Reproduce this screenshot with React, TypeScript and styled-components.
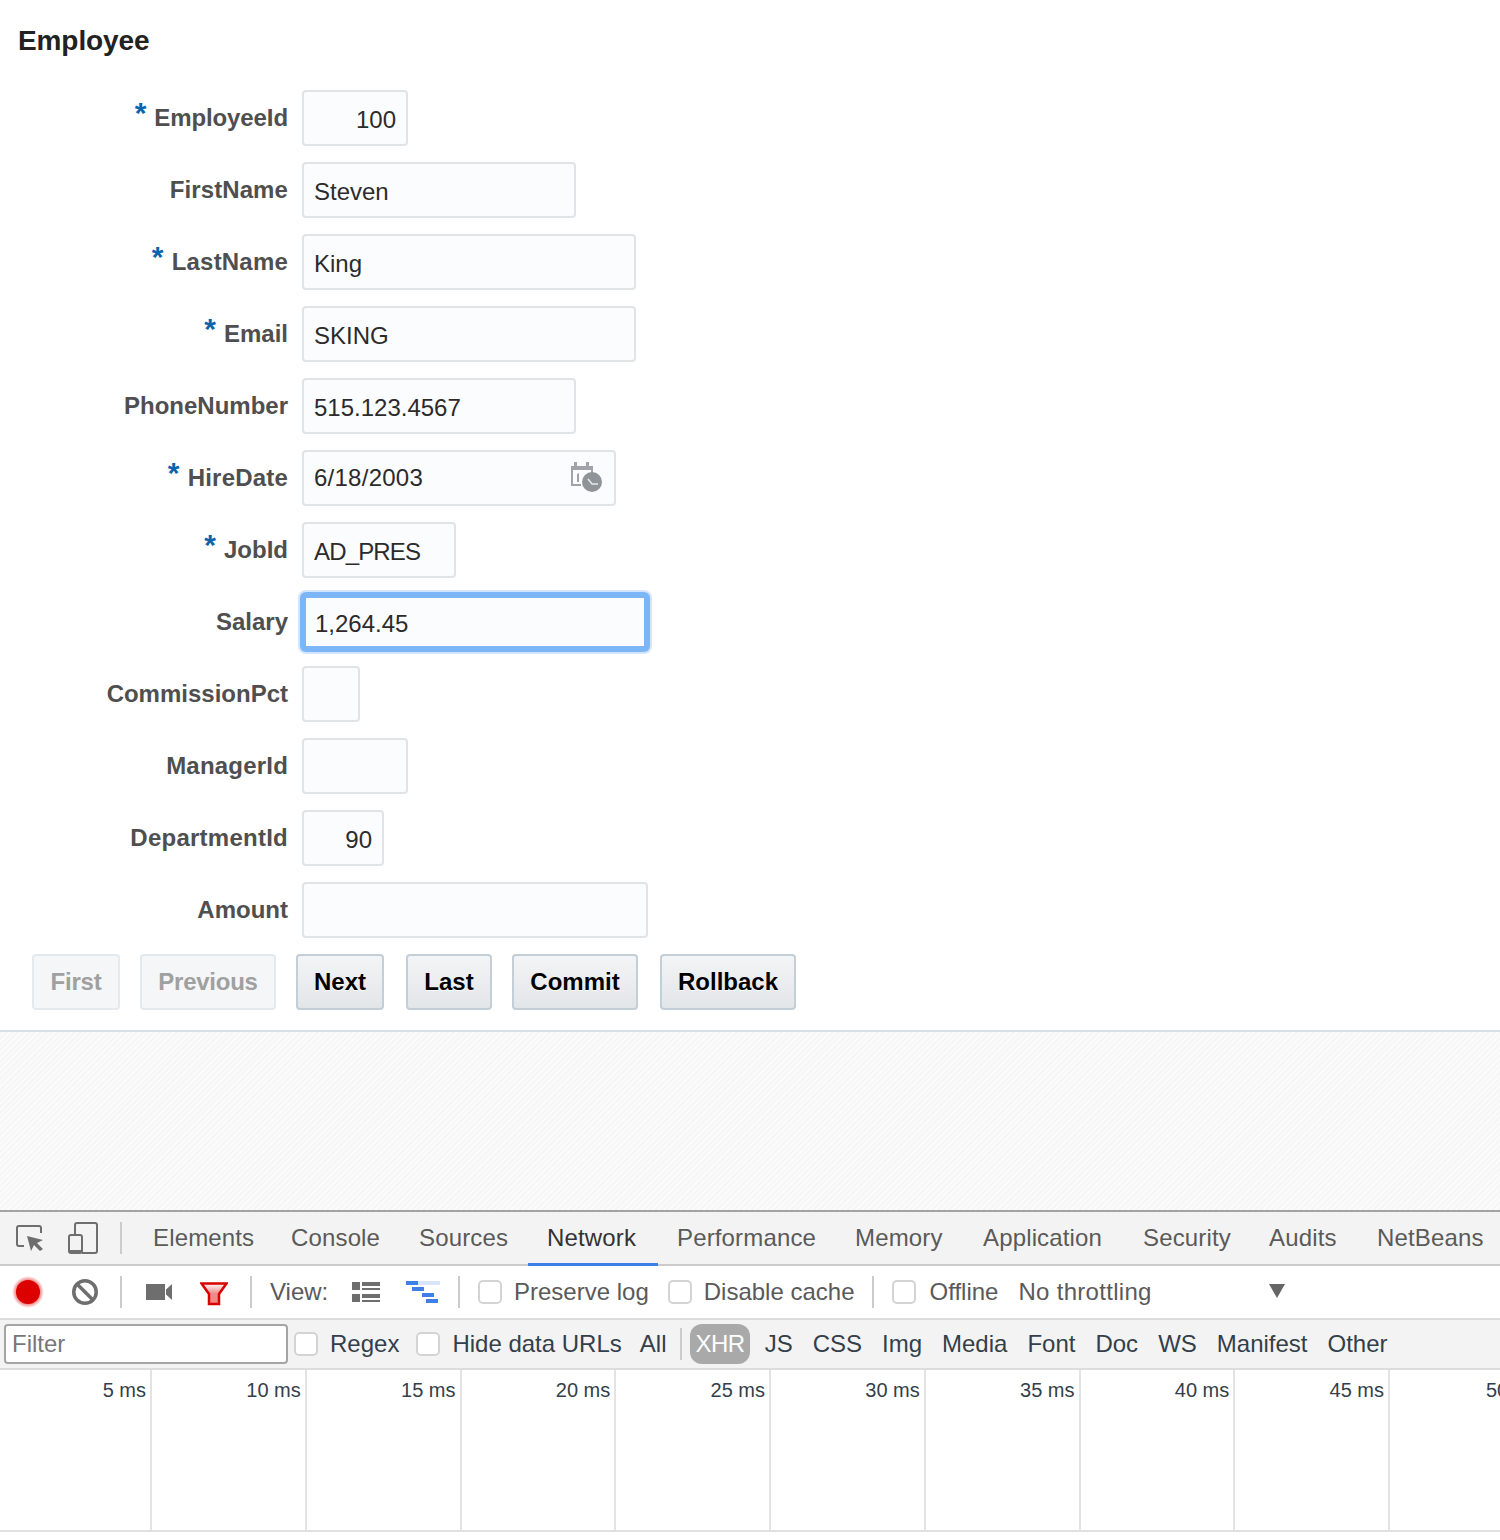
import styled, { createGlobalStyle } from 'styled-components'

const GlobalStyle = createGlobalStyle`
  html, body {
    margin: 0;
    background: #fff;
  }
  body {
    width: 1500px;
    height: 1540px;
    overflow: hidden;
    font-family: "Liberation Sans", Arial, sans-serif;
  }
  * {
    box-sizing: border-box;
  }
`

const Page = styled.div`
  display: flex;
  flex-direction: column;
  height: 1540px;
`
const Title = styled.h1`
  margin: 0;
  padding-left: 18px;
  height: 82px;
  font-size: 28px;
  line-height: 82px;
  font-weight: 700;
  letter-spacing: -0.1px;
  color: #222;
`
const Form = styled.div`
  display: flex;
  flex-direction: column;
  gap: 16px;
  margin-top: 8px;
`
const Row = styled.div`
  display: flex;
  align-items: center;
  height: 56px;
`
const Label = styled.label<{ $track?: number }>`
  width: 288px;
  margin-right: 14px;
  text-align: right;
  font-size: 24px;
  font-weight: 700;
  letter-spacing: ${(p) => p.$track ?? 0}px;
  color: #4f4f4f;
`
const Star = styled.span`
  margin-right: 8px;
  font-size: 30px;
  line-height: 0;
  vertical-align: 3px;
  color: #0a63ad;
`
const Input = styled.input<{ $w: number; $end?: boolean; $focus?: boolean; $track?: number }>`
  width: ${(p) => p.$w}px;
  height: 56px;
  padding: 4px ${(p) => (p.$focus ? '9px' : '10px')} 0;
  border: ${(p) => (p.$focus ? '4px solid #7db6f7' : '2px solid #e0e4e7')};
  border-radius: 4px;
  background: #fbfcfe;
  box-shadow: ${(p) => (p.$focus ? '0 0 0 2px #7db6f7, 0 0 0 4px #d3e5fb' : 'none')};
  outline: none;
  font: 24px "Liberation Sans", Arial, sans-serif;
  letter-spacing: ${(p) => p.$track ?? 0}px;
  color: #2b2b2b;
  text-align: ${(p) => (p.$end ? 'right' : 'left')};
`
const DateBox = styled.div`
  display: flex;
  align-items: center;
  width: 314px;
  height: 56px;
  padding: 0 12px 0 10px;
  border: 2px solid #e0e4e7;
  border-radius: 4px;
  background: #fbfcfe;
`
const DateInput = styled.input`
  flex: 1;
  min-width: 0;
  padding: 0;
  border: 0;
  outline: none;
  background: transparent;
  font: 24px "Liberation Sans", Arial, sans-serif;
  letter-spacing: 0.25px;
  color: #2b2b2b;
`
const Buttons = styled.div`
  display: flex;
  gap: 20px;
  margin-top: 16px;
  padding-left: 32px;
`
const Button = styled.button<{ $w: number; $l?: number }>`
  width: ${(p) => p.$w}px;
  height: 56px;
  margin-left: ${(p) => p.$l ?? 0}px;
  padding: 0;
  border: 2px solid #c3ced7;
  border-radius: 4px;
  background: linear-gradient(#f2f4f5, #e3e6e9);
  font: 700 24px "Liberation Sans", Arial, sans-serif;
  color: #000;
  text-shadow: 0 1px 0 #fff;
  &:disabled {
    border-color: #e4e9ee;
    background: #f5f6f8;
    color: #a0a0a0;
    letter-spacing: -0.25px;
    text-shadow: none;
  }
`
const Hatch = styled.div`
  height: 180px;
  margin-top: 20px;
  border-top: 2px solid #d9e1e8;
  background: repeating-linear-gradient(135deg, #f6f6f6 0 2px, #fbfbfb 2px 4px);
`
const Tabs = styled.div`
  display: flex;
  align-items: center;
  height: 56px;
  border-top: 2px solid #a3a3a3;
  border-bottom: 2px solid #ccc;
  background: #f3f3f3;
`
const Slot = styled.div<{ $w: number }>`
  display: flex;
  align-items: center;
  justify-content: center;
  flex: 0 0 ${(p) => p.$w}px;
`
const Divider = styled.div<{ $l: number; $r: number }>`
  flex: 0 0 2px;
  height: 32px;
  margin-left: ${(p) => p.$l}px;
  margin-right: ${(p) => p.$r}px;
  background: #ccc;
`
const Tab = styled.div<{ $w: number; $active?: boolean }>`
  display: flex;
  align-items: center;
  align-self: stretch;
  flex: 0 0 ${(p) => p.$w}px;
  margin-bottom: -2px;
  padding-left: 19px;
  border-bottom: 3px solid ${(p) => (p.$active ? '#3f7fe8' : 'transparent')};
  font-size: 24px;
  letter-spacing: 0.15px;
  color: ${(p) => (p.$active ? '#333' : '#5a5a5a')};
`
const Toolbar = styled.div`
  display: flex;
  align-items: center;
  height: 52px;
  background: #fff;
  font-size: 24px;
  color: #5a5a5a;
`
const ViewText = styled.span`
  flex: 0 0 60px;
`
const Check = styled.span`
  flex: 0 0 24px;
  height: 24px;
  border: 2px solid #d4d4d4;
  border-radius: 5px;
  background: #fff;
`
const CheckLabel = styled.span<{ $l: number; $r: number }>`
  margin-left: ${(p) => p.$l}px;
  margin-right: ${(p) => p.$r}px;
  white-space: nowrap;
`
const Throttling = styled.span`
  letter-spacing: 0.3px;
  white-space: nowrap;
`
const Arrow = styled.span`
  margin-left: 117px;
  margin-top: -2px;
  width: 0;
  height: 0;
  border-left: 8px solid transparent;
  border-right: 8px solid transparent;
  border-top: 14px solid #666;
`
const FilterBar = styled.div`
  display: flex;
  align-items: center;
  height: 52px;
  padding-left: 4px;
  border-top: 2px solid #ddd;
  border-bottom: 2px solid #ddd;
  background: #f3f3f3;
  font-size: 24px;
  color: #333f4a;
`
const FilterInput = styled.input`
  flex: 0 0 284px;
  min-width: 0;
  height: 40px;
  margin-right: 6px;
  padding: 0 6px;
  border: 2px solid #a5a5a5;
  border-radius: 4px;
  background: #fff;
  outline: none;
  font: 24px "Liberation Sans", Arial, sans-serif;
  &::placeholder {
    color: #777;
    opacity: 1;
  }
`
const Kind = styled.span<{ $selected?: boolean }>`
  margin: ${(p) => (p.$selected ? '0 5px 0 0' : '0 10px')};
  padding: 0 ${(p) => (p.$selected ? 5 : 0)}px;
  height: 40px;
  line-height: 40px;
  border-radius: 12px;
  background: ${(p) => (p.$selected ? '#a9a9a9' : 'transparent')};
  color: ${(p) => (p.$selected ? '#fff' : 'inherit')};
  letter-spacing: ${(p) => (p.$selected ? -0.5 : 0)}px;
  white-space: nowrap;
`
const Timeline = styled.div`
  display: flex;
  height: 162px;
  overflow: hidden;
  border-bottom: 2px solid #e0e0e0;
`
const Tick = styled.div`
  flex: 0 0 154.75px;
  padding: 8px 4px 0 0;
  border-right: 2px solid #e3e3e3;
  text-align: right;
  font-size: 20px;
  line-height: 24px;
  color: #333f4a;
  white-space: nowrap;
  &:first-child {
    flex-basis: 152px;
  }
  &:last-child {
    flex: 0 0 200px;
    padding-left: 96px;
    text-align: left;
    border-right: 0;
  }
`

const InspectIcon = () => (
  <svg width="28" height="26" viewBox="0 0 28 26">
    <path d="M8 21H3a2 2 0 0 1-2-2V3a2 2 0 0 1 2-2h20a2 2 0 0 1 2 2v5" fill="none" stroke="#6e6e6e" strokeWidth="2" />
    <path d="M11 11l16 4-6 3 6 6-3 2-6-6-3 6z" fill="#6e6e6e" />
  </svg>
)
const DeviceIcon = () => (
  <svg width="30" height="32" viewBox="0 0 30 32">
    <path d="M7 12V3a2 2 0 0 1 2-2h18a2 2 0 0 1 2 2v26a2 2 0 0 1-2 2H14" fill="none" stroke="#6e6e6e" strokeWidth="2" />
    <rect x="1" y="13" width="13" height="18" rx="2" fill="none" stroke="#6e6e6e" strokeWidth="2" />
    <rect x="1" y="28" width="13" height="3" fill="#6e6e6e" />
  </svg>
)
const RecordIcon = () => (
  <svg width="32" height="32" viewBox="0 0 32 32">
    <defs>
      <radialGradient id="glow">
        <stop offset="0.7" stopColor="#dc0000" stopOpacity="0.55" />
        <stop offset="1" stopColor="#dc0000" stopOpacity="0" />
      </radialGradient>
    </defs>
    <circle cx="16" cy="16" r="16" fill="url(#glow)" />
    <circle cx="16" cy="16" r="12" fill="#dc0000" />
  </svg>
)
const StopIcon = () => (
  <svg width="28" height="28" viewBox="0 0 28 28">
    <circle cx="14" cy="14" r="11.250" fill="none" stroke="#6e6e6e" strokeWidth="3.500" />
    <path d="M6 6l16 16" stroke="#6e6e6e" strokeWidth="3.500" />
  </svg>
)
const CameraIcon = () => (
  <svg width="26" height="16" viewBox="0 0 26 16">
    <rect width="19" height="16" fill="#6e6e6e" />
    <path d="M20 5.500L26 0v16l-6-5.500z" fill="#6e6e6e" />
  </svg>
)
const FunnelIcon = () => (
  <svg width="28" height="27" viewBox="0 -3 28 27">
    <defs>
      <linearGradient id="funnel" x1="0" y1="0" x2="0" y2="1">
        <stop offset="0.1" stopColor="#fbe3e3" />
        <stop offset="0.5" stopColor="#ee8a8a" />
      </linearGradient>
    </defs>
    <path d="M1.500 1.500h25L19 12v10H9V12z" fill="url(#funnel)" stroke="#d90000" strokeWidth="2.500" />
  </svg>
)
const ListIcon = () => (
  <svg width="28" height="20" viewBox="0 0 28 20" fill="#6e6e6e">
    <rect width="8" height="8" />
    <rect y="12" width="8" height="8" />
    <rect x="10" width="18" height="4" />
    <rect x="10" y="6" width="18" height="2" />
    <rect x="10" y="12" width="18" height="4" />
    <rect x="10" y="18" width="18" height="2" />
  </svg>
)
const WaterfallIcon = () => (
  <svg width="34" height="22" viewBox="0 0 34 22">
    <rect x="12" width="22" height="4" fill="#d7e4fa" />
    <rect width="12" height="4" fill="#3f7fe8" />
    <rect x="6" y="6" width="12" height="4" fill="#3f7fe8" />
    <rect x="16" y="12" width="12" height="4" fill="#3f7fe8" />
    <rect x="20" y="18" width="12" height="4" fill="#3f7fe8" />
  </svg>
)
const CalendarIcon = () => (
  <svg width="32" height="32" viewBox="0 0 32 32">
    <path d="M11 23H2V5h20v6" fill="none" stroke="#a0a4a8" strokeWidth="2" />
    <rect x="1" y="4" width="22" height="4" fill="#a0a4a8" />
    <rect x="4" y="0" width="3" height="6" fill="#a0a4a8" />
    <rect x="16" y="0" width="3" height="6" fill="#a0a4a8" />
    <path d="M7 12l2-1v9H7z" fill="#a0a4a8" />
    <circle cx="22" cy="20" r="10" fill="#8f9498" />
    <path d="M18 17l4 5h6" fill="none" stroke="#e8eaec" strokeWidth="1.500" />
  </svg>
)

const tabs: [string, number][] = [
  ['Elements', 138],
  ['Console', 128],
  ['Sources', 128],
  ['Network', 130],
  ['Performance', 178],
  ['Memory', 128],
  ['Application', 160],
  ['Security', 126],
  ['Audits', 108],
  ['NetBeans', 142],
]
const kinds = ['JS', 'CSS', 'Img', 'Media', 'Font', 'Doc', 'WS', 'Manifest', 'Other']
const ticks = ['5 ms', '10 ms', '15 ms', '20 ms', '25 ms', '30 ms', '35 ms', '40 ms', '45 ms', '50 ms']

export default function App() {
  return (
    <Page>
      <GlobalStyle />
      <Title>Employee</Title>
      <Form>
        <Row>
          <Label $track={-0.1}><Star>*</Star>EmployeeId</Label>
          <Input $w={106} $end readOnly value="100" />
        </Row>
        <Row>
          <Label $track={0.1}>FirstName</Label>
          <Input $w={274} readOnly value="Steven" />
        </Row>
        <Row>
          <Label $track={0.2}><Star>*</Star>LastName</Label>
          <Input $w={334} readOnly value="King" />
        </Row>
        <Row>
          <Label><Star>*</Star>Email</Label>
          <Input $w={334} readOnly value="SKING" />
        </Row>
        <Row>
          <Label>PhoneNumber</Label>
          <Input $w={274} readOnly value="515.123.4567" />
        </Row>
        <Row>
          <Label $track={0.2}><Star>*</Star>HireDate</Label>
          <DateBox>
            <DateInput readOnly value="6/18/2003" />
            <CalendarIcon />
          </DateBox>
        </Row>
        <Row>
          <Label><Star>*</Star>JobId</Label>
          <Input $w={154} $track={-0.85} readOnly value="AD_PRES" />
        </Row>
        <Row>
          <Label>Salary</Label>
          <Input $w={346} $focus readOnly value="1,264.45" />
        </Row>
        <Row>
          <Label>CommissionPct</Label>
          <Input $w={58} readOnly value="" />
        </Row>
        <Row>
          <Label $track={0.2}>ManagerId</Label>
          <Input $w={106} readOnly value="" />
        </Row>
        <Row>
          <Label $track={0.25}>DepartmentId</Label>
          <Input $w={82} $end readOnly value="90" />
        </Row>
        <Row>
          <Label>Amount</Label>
          <Input $w={346} readOnly value="" />
        </Row>
      </Form>
      <Buttons>
        <Button $w={88} disabled>First</Button>
        <Button $w={136} disabled>Previous</Button>
        <Button $w={88}>Next</Button>
        <Button $w={86} $l={2}>Last</Button>
        <Button $w={126}>Commit</Button>
        <Button $w={136} $l={2}>Rollback</Button>
      </Buttons>
      <Hatch />
      <Tabs>
        <Slot $w={60}><InspectIcon /></Slot>
        <Slot $w={46}><DeviceIcon /></Slot>
        <Divider $l={14} $r={12} />
        {tabs.map(([name, width]) => (
          <Tab key={name} $w={width} $active={name === 'Network'}>{name}</Tab>
        ))}
      </Tabs>
      <Toolbar>
        <Slot $w={56}><RecordIcon /></Slot>
        <Slot $w={58}><StopIcon /></Slot>
        <Divider $l={6} $r={0} />
        <Slot $w={74}><CameraIcon /></Slot>
        <Slot $w={36}><FunnelIcon /></Slot>
        <Divider $l={18} $r={18} />
        <ViewText>View:</ViewText>
        <Slot $w={72}><ListIcon /></Slot>
        <Slot $w={42}><WaterfallIcon /></Slot>
        <Divider $l={14} $r={18} />
        <Check />
        <CheckLabel $l={12} $r={19}>Preserve log</CheckLabel>
        <Check />
        <CheckLabel $l={12} $r={18}>Disable cache</CheckLabel>
        <Divider $l={0} $r={18} />
        <Check />
        <CheckLabel $l={13} $r={20}>Offline</CheckLabel>
        <Throttling>No throttling</Throttling>
        <Arrow />
      </Toolbar>
      <FilterBar>
        <FilterInput placeholder="Filter" />
        <Check />
        <CheckLabel $l={12} $r={17}>Regex</CheckLabel>
        <Check />
        <CheckLabel $l={12} $r={18}>Hide data URLs</CheckLabel>
        <span>All</span>
        <Divider $l={14} $r={8} />
        <Kind $selected>XHR</Kind>
        {kinds.map((k) => (
          <Kind key={k}>{k}</Kind>
        ))}
      </FilterBar>
      <Timeline>
        {ticks.map((t) => (
          <Tick key={t}>{t}</Tick>
        ))}
      </Timeline>
    </Page>
  )
}
